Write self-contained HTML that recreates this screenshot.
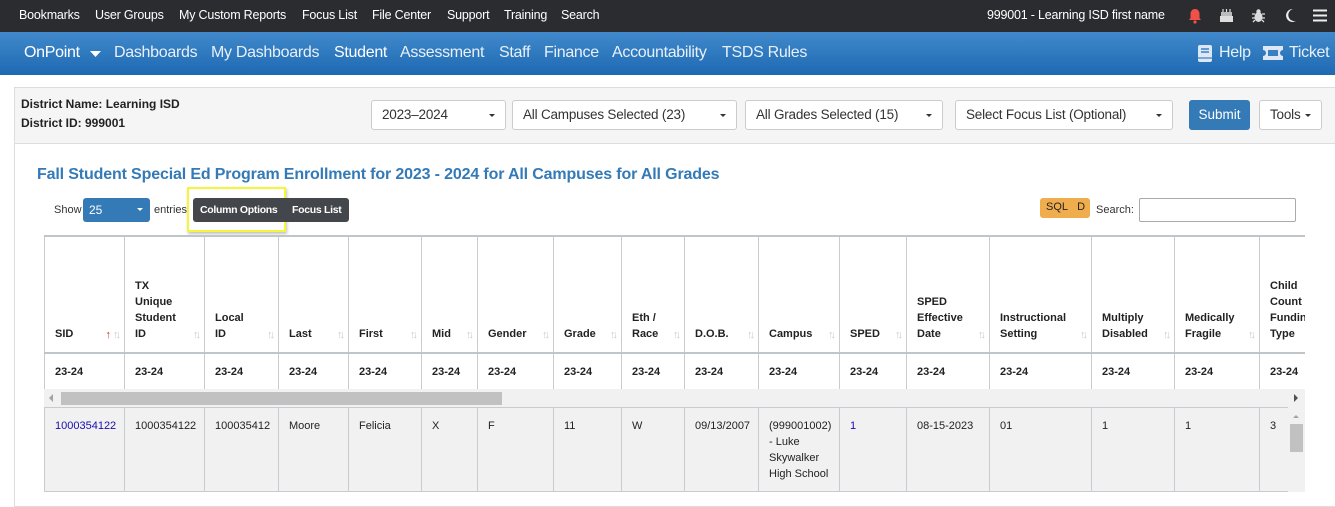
<!DOCTYPE html>
<html><head><meta charset="utf-8">
<style>
*{box-sizing:border-box;margin:0;padding:0}
body{width:1335px;height:492px;overflow:hidden;background:#fff;font-family:"Liberation Sans",Arial,sans-serif;position:relative}
.abs{position:absolute}
#top{left:0;top:0;width:1335px;height:32px;background:#2b2c30;color:#fff;font-size:12.5px;letter-spacing:-0.2px}
#top span{position:absolute;top:8px;white-space:nowrap}
#nav{left:0;top:32px;width:1335px;height:43px;background:linear-gradient(#4189cb,#1d69b2);color:#e8f0f8;font-size:16px;letter-spacing:-0.3px}
#nav span{position:absolute;top:12px;white-space:nowrap}
#panel{left:14px;top:87px;width:1330px;height:420px;border:1px solid #ddd;background:#fff}
#phead{left:14px;top:87px;width:1330px;height:57px;background:#f5f5f5;border:1px solid #ddd}
.sel{position:absolute;top:100px;height:30px;border:1px solid #ccc;border-radius:3px;background:#fff;font-size:13.5px;letter-spacing:-0.2px;color:#333;padding:6px 10px;white-space:nowrap}
.sel:after{content:"";position:absolute;right:10px;top:13px;border-left:3.5px solid transparent;border-right:3.5px solid transparent;border-top:3.5px solid #333}
.t{font-size:11px;color:#333}
table{position:absolute;left:44px;top:235px;width:1295px;border-collapse:collapse;table-layout:fixed;font-size:11px;color:#222}
td{border:1px solid #c8ccd0;vertical-align:bottom;padding:0 10px;font-weight:bold;position:relative;line-height:16px;overflow:hidden;white-space:nowrap}
tr.h td{height:117px;padding-bottom:10px;border-top:2px solid #c0c5ca;border-bottom:2px solid #c0c5ca}
tr.f td{height:37px;vertical-align:middle}
tr.h td:after{content:"↑↓";position:absolute;right:6px;bottom:9px;font-size:11px;color:#ccc;letter-spacing:-3px;font-weight:normal}
tr.h td.n:after{content:""}
.clip{position:absolute;left:0;top:0;width:1305px;height:492px;overflow:hidden}
tr.d td{vertical-align:top;font-weight:normal;padding-top:10px;height:84px;white-space:normal}
</style></head><body>
<div id="top" class="abs">
<span style="left:19px">Bookmarks</span><span style="left:95px">User Groups</span><span style="left:179px">My Custom Reports</span><span style="left:302px">Focus List</span><span style="left:372px">File Center</span><span style="left:447px">Support</span><span style="left:504px">Training</span><span style="left:561px">Search</span>
<span style="left:987px">999001 - Learning ISD first name</span>
<svg class="abs" style="left:1188px;top:8px" width="14" height="16" viewBox="0 0 14 16"><path d="M7 1c-3 0-4.5 2.5-4.5 5v4L1 12h12l-1.5-2V6C11.5 3.5 10 1 7 1z" fill="#f0504a"/><circle cx="7" cy="14" r="1.6" fill="#f0504a"/></svg>
<svg class="abs" style="left:1219px;top:8px" width="15" height="15" viewBox="0 0 15 15"><rect x="1" y="8" width="13" height="6" fill="#ddd"/><rect x="2" y="4" width="11" height="4" fill="#bbb"/><path d="M4 1v3M7.5 1v3M11 1v3" stroke="#ddd" stroke-width="1.2"/></svg>
<svg class="abs" style="left:1251px;top:8px" width="15" height="15" viewBox="0 0 15 15"><ellipse cx="7.5" cy="9" rx="4" ry="5" fill="#ddd"/><circle cx="7.5" cy="3.5" r="2.2" fill="#ddd"/><path d="M1 6h3M11 6h3M1 10h3M11 10h3M2 14l2-2M13 14l-2-2" stroke="#ddd" stroke-width="1.3"/></svg>
<svg class="abs" style="left:1284px;top:8px" width="13" height="15" viewBox="0 0 13 15"><path d="M9 1a6.5 6.5 0 1 0 3 12A5.5 5.5 0 0 1 9 1z" fill="#eee"/></svg>
<svg class="abs" style="left:1313px;top:9px" width="14" height="13" viewBox="0 0 14 13"><path d="M0 1.5h14M0 6.5h14M0 11.5h14" stroke="#eee" stroke-width="2"/></svg>
</div>
<div id="nav" class="abs">
<span style="left:24px;color:#fff">OnPoint</span>
<svg class="abs" style="left:90px;top:19px" width="11" height="7"><path d="M0 0h11L5.5 6z" fill="#fff"/></svg>
<span style="left:114px">Dashboards</span><span style="left:211px">My Dashboards</span><span style="left:334px;color:#fff">Student</span><span style="left:400px">Assessment</span><span style="left:499px">Staff</span><span style="left:544px">Finance</span><span style="left:612px">Accountability</span><span style="left:722px">TSDS Rules</span>
<svg class="abs" style="left:1197px;top:12px" width="16" height="19" viewBox="0 0 16 19"><rect x="1" y="1" width="14" height="17" rx="2" fill="#dde8f4"/><path d="M4 5h8M4 8h8" stroke="#3a7fc2" stroke-width="1.5"/><path d="M1 14h14" stroke="#3a7fc2" stroke-width="1.2"/></svg>
<span style="left:1219px">Help</span>
<svg class="abs" style="left:1263px;top:14px" width="20" height="14" viewBox="0 0 20 14"><path d="M0 0h20v4a3 3 0 0 0 0 6v4H0v-4a3 3 0 0 0 0-6z" fill="#dde8f4"/><rect x="5" y="4" width="10" height="6" fill="#3a7fc2"/></svg>
<span style="left:1289px">Ticket</span>
</div>
<div id="panel" class="abs"></div>
<div id="phead" class="abs"></div>
<div class="abs" style="left:21px;top:95px;font-size:12px;font-weight:bold;color:#222;line-height:19px">District Name: Learning ISD<br>District ID: 999001</div>
<div class="sel" style="left:371px;width:135px">2023–2024</div>
<div class="sel" style="left:512px;width:225px">All Campuses Selected (23)</div>
<div class="sel" style="left:745px;width:198px">All Grades Selected (15)</div>
<div class="sel" style="left:955px;width:218px">Select Focus List (Optional)</div>
<div class="abs" style="left:1189px;top:100px;width:61px;height:30px;background:#337ab7;border-radius:3px;color:#fff;font-size:13.5px;text-align:center;line-height:29px">Submit</div>
<div class="sel" style="left:1259px;width:63px;padding-left:10px">Tools</div>
<div class="abs" style="left:37px;top:166px;font-size:16px;letter-spacing:-0.15px;font-weight:bold;color:#337ab7;white-space:nowrap">Fall Student Special Ed Program Enrollment for 2023 - 2024 for All Campuses for All Grades</div>
<div class="abs t" style="left:54px;top:204px">Show</div>
<div class="abs" style="left:83px;top:198px;width:67px;height:24px;background:#337ab7;border-radius:3px;color:#fff;font-size:12px;padding:5px 6px">25<span style="position:absolute;right:7px;top:10px;border-left:3px solid transparent;border-right:3px solid transparent;border-top:3px solid #fff"></span></div>
<div class="abs t" style="left:154px;top:204px">entries</div>
<div class="abs" style="left:187px;top:187px;width:99px;height:45px;border:2px solid #f5f53a;box-shadow:1px 2px 3px rgba(0,0,0,.25)"></div>
<div class="abs" style="left:193px;top:198px;width:156px;height:24px;background:#43464b;border-radius:3px"></div>
<div class="abs" style="left:200px;top:204px;font-size:10.5px;letter-spacing:-0.3px;font-weight:bold;color:#fff;white-space:nowrap">Column Options</div>
<div class="abs" style="left:292px;top:204px;font-size:10.5px;letter-spacing:-0.3px;font-weight:bold;color:#fff;white-space:nowrap">Focus List</div>
<div class="abs" style="left:1040px;top:198px;width:50px;height:20px;background:#f0ad4e;border-radius:3px;font-size:11px;color:#222;padding:3px 6px;white-space:nowrap">SQL&nbsp;&nbsp;&nbsp;D</div>
<div class="abs t" style="left:1096px;top:204px">Search:</div>
<div class="abs" style="left:1139px;top:198px;width:157px;height:24px;border:1px solid #aaa;border-radius:2px"></div>
<div class="clip">
<div class="abs" style="left:44px;top:389px;width:1261px;height:103px;background:#f1f1f1"></div>
<table>
<colgroup><col style="width:80px"><col style="width:80px"><col style="width:74px"><col style="width:70px"><col style="width:73px"><col style="width:56px"><col style="width:76px"><col style="width:68px"><col style="width:63px"><col style="width:74px"><col style="width:81px"><col style="width:67px"><col style="width:83px"><col style="width:102px"><col style="width:83px"><col style="width:85px"><col style="width:80px"></colgroup>
<tr class="h"><td>SID<span class="abs" style="right:13px;bottom:9px;font-size:11px;color:#c33;font-weight:normal">↑</span></td><td>TX<br>Unique<br>Student<br>ID</td><td>Local<br>ID</td><td>Last</td><td>First</td><td>Mid</td><td>Gender</td><td>Grade</td><td>Eth /<br>Race</td><td>D.O.B.</td><td>Campus</td><td>SPED</td><td>SPED<br>Effective<br>Date</td><td>Instructional<br>Setting</td><td>Multiply<br>Disabled</td><td>Medically<br>Fragile</td><td class="n">Child<br>Count<br>Funding<br>Type</td></tr>
<tr class="f"><td>23-24</td><td>23-24</td><td>23-24</td><td>23-24</td><td>23-24</td><td>23-24</td><td>23-24</td><td>23-24</td><td>23-24</td><td>23-24</td><td>23-24</td><td>23-24</td><td>23-24</td><td>23-24</td><td>23-24</td><td>23-24</td><td>23-24</td></tr>
</table>
<div class="abs" style="left:44px;top:389px;width:1261px;height:18px;background:#f1f1f1"></div>
<div class="abs" style="left:61px;top:392px;width:441px;height:13px;background:#c1c1c1"></div>
<div class="abs" style="left:49px;top:394px;border-top:4px solid transparent;border-bottom:4px solid transparent;border-right:4px solid #a3a3a3"></div>
<div class="abs" style="left:1294px;top:394px;border-top:4px solid transparent;border-bottom:4px solid transparent;border-left:4px solid #505050"></div>
<table style="top:407px">
<colgroup><col style="width:80px"><col style="width:80px"><col style="width:74px"><col style="width:70px"><col style="width:73px"><col style="width:56px"><col style="width:76px"><col style="width:68px"><col style="width:63px"><col style="width:74px"><col style="width:81px"><col style="width:67px"><col style="width:83px"><col style="width:102px"><col style="width:83px"><col style="width:85px"><col style="width:80px"></colgroup>
<tr class="d"><td style="color:#1a0dab">1000354122</td><td>1000354122</td><td>100035412</td><td>Moore</td><td>Felicia</td><td>X</td><td>F</td><td>11</td><td>W</td><td>09/13/2007</td><td style="padding-right:2px">(999001002)<br>- Luke<br>Skywalker<br>High School</td><td style="color:#1a0dab">1</td><td>08-15-2023</td><td>01</td><td>1</td><td>1</td><td>3</td></tr>
</table>
<div class="abs" style="left:1288px;top:407px;width:17px;height:85px;background:#f1f1f1"></div>
<div class="abs" style="left:1290px;top:424px;width:13px;height:28px;background:#c1c1c1"></div>
<div class="abs" style="left:1293px;top:415px;border-left:3px solid transparent;border-right:3px solid transparent;border-bottom:3px solid #a3a3a3"></div>
</div>
</body></html>
